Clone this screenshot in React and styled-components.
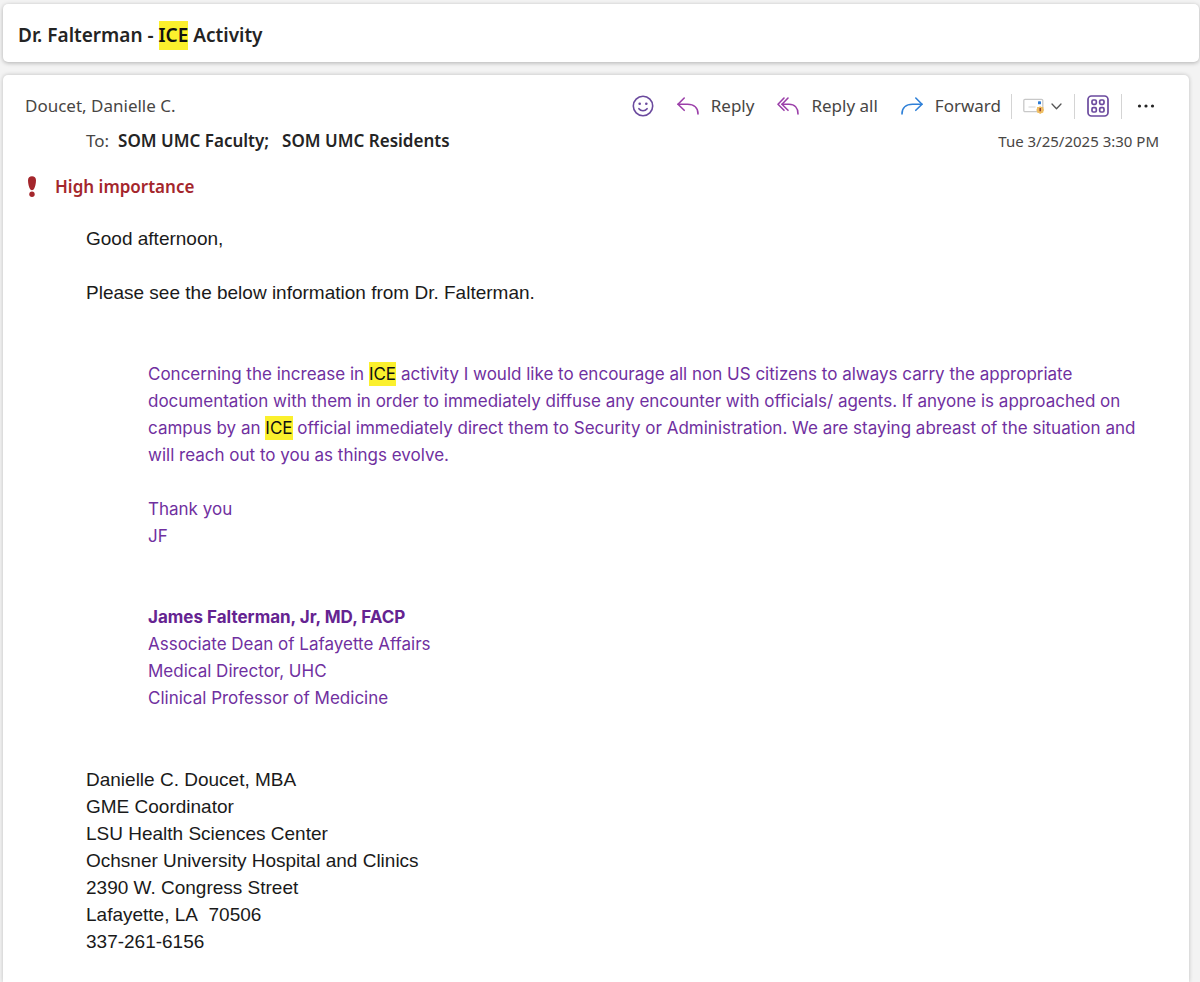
import styled, { createGlobalStyle, css } from 'styled-components';

const GlobalStyle = createGlobalStyle`
  * {
    box-sizing: border-box;
  }

  body {
    margin: 0;
    background: #f3f3f3;
    color: #242424;
    font-family: "Noto Sans", "Open Sans", sans-serif;
  }
`;

const Page = styled.div`
  display: flex;
  flex-direction: column;
  gap: 13px;
  min-height: 100vh;
  padding: 4px 1px 0 3px;
`;

const SubjectCard = styled.header`
  display: flex;
  align-items: center;
  height: 58px;
  padding: 4px 15px 0;
  background: #fff;
  border-radius: 5px;
  box-shadow: 0 1px 4px rgba(0, 0, 0, 0.28);
`;

const Subject = styled.h1`
  margin: 0;
  font-size: 19px;
  line-height: 29px;
  font-weight: 600;
`;

const Highlight = styled.mark`
  display: inline-block;
  height: ${props => props.$tall ? '29px' : '24px'};
  line-height: ${props => props.$tall ? '29px' : '24px'};
  background: #fbf02d;
  color: #111;
`;

const MailCard = styled.main`
  flex: 1;
  margin-right: 10px;
  padding: 16px 30px 24px 22px;
  background: #fff;
  border-radius: 5px 5px 0 0;
  box-shadow: 0 0 4px rgba(0, 0, 0, 0.22);
`;

const HeaderRow = styled.div`
  display: flex;
  align-items: center;
  justify-content: space-between;
  height: 30px;
`;

const Sender = styled.span`
  font-size: 17px;
  line-height: 24px;
  color: #484644;
`;

const Toolbar = styled.div`
  display: flex;
  align-items: center;
  margin-right: 4px;
`;

const baseButton = css`
  display: flex;
  align-items: center;
  padding: 0;
  background: none;
  border: none;
  color: #484644;
  cursor: pointer;
`;

const ActionButton = styled.button`
  ${baseButton}
  gap: 12px;
  margin-left: 23px;
  font-family: inherit;
  font-size: 17px;
  line-height: 24px;
`;

const IconButton = styled.button`
  ${baseButton}
  margin-left: ${props => props.$gap || 0}px;
`;

const Divider = styled.span`
  width: 1px;
  height: 25px;
  margin-left: ${props => props.$gap || 10}px;
  background: #d4d4d4;
`;

const RecipientRow = styled.div`
  display: flex;
  align-items: center;
  justify-content: space-between;
  height: 40px;
  padding-left: 61px;
`;

const Recipients = styled.div`
  display: flex;
  gap: 9px;
  font-size: 17px;
  line-height: 24px;
  color: #484644;
`;

const Recipient = styled.span`
  font-weight: 600;
  color: #242424;

  & + & {
    margin-left: 4px;
  }
`;

const SentTime = styled.time`
  font-size: 15px;
  line-height: 20px;
  color: #484644;
`;

const Importance = styled.div`
  display: flex;
  align-items: center;
  gap: 18px;
  height: 24px;
  margin: 14px 0 26px 2px;
  font-size: 17px;
  line-height: 24px;
  font-weight: 600;
  color: #a4262c;
`;

const Body = styled.article`
  padding-left: 61px;
  font-family: "Liberation Sans", Arial, sans-serif;
  font-size: 19px;
  line-height: 27px;
  color: #1a1a1a;
`;

const Paragraph = styled.p`
  margin: 0 0 27px;
`;

const Quote = styled.blockquote`
  margin: 55px -20px 54px 62px;
  font-family: Inter, Roboto, sans-serif;
  font-size: 17px;
  color: #7030a0;
`;

const Signature = styled.address`
  margin-top: 54px;
  font-style: normal;
`;

const SignerName = styled.strong`
  font-weight: 700;
  color: #652391;
`;

function SmileIcon() {
  return (
    <svg width="22" height="22" viewBox="0 0 22 22" fill="none" stroke="#6b4a9e" strokeWidth="1.6" strokeLinecap="round">
      <circle cx="11" cy="11" r="9.7" />
      <circle cx="7.7" cy="8.8" r="1.3" fill="#6b4a9e" stroke="none" />
      <circle cx="14.3" cy="8.8" r="1.3" fill="#6b4a9e" stroke="none" />
      <path d="M6.9 13.7c2 2.8 6.2 2.8 8.2 0" />
    </svg>
  );
}

function ReplyIcon() {
  return (
    <svg width="22" height="18" viewBox="0 0 22 18" fill="none" stroke="#9b3fa9" strokeWidth="1.6" strokeLinecap="round" strokeLinejoin="round">
      <path d="M7.2 1 1 7.3l6.2 6" />
      <path d="M1 7.3h9.5C17 7.3 21 11 21 17" />
    </svg>
  );
}

function ReplyAllIcon() {
  return (
    <svg width="22" height="18" viewBox="0 0 22 18" fill="none" stroke="#9b3fa9" strokeWidth="1.6" strokeLinecap="round" strokeLinejoin="round">
      <path d="M7 1 1 7.3l6 6" />
      <path d="m11 1-6 6.3 6 6" />
      <path d="M5 7.3h7c5.5 0 9 3.7 9 9.7" />
    </svg>
  );
}

function ForwardIcon() {
  return (
    <svg width="22" height="18" viewBox="0 0 22 18" fill="none" stroke="#2f80d8" strokeWidth="1.6" strokeLinecap="round" strokeLinejoin="round">
      <path d="m14.8 1 6.2 6.3-6.2 6" />
      <path d="M21 7.3h-9.5C5 7.3 1 11 1 17" />
    </svg>
  );
}

function MailIcon() {
  return (
    <svg width="21" height="16" viewBox="0 0 21 16" fill="none">
      <rect x="0.8" y="1.3" width="19" height="12.4" rx="1.2" stroke="#c8c8c8" strokeWidth="1.3" />
      <path d="M5.5 9h7" stroke="#dedede" strokeWidth="1.3" />
      <rect x="15" y="3.3" width="3" height="3" rx="0.6" fill="#2f7cd3" />
      <path d="M17.2 8.2 18.6 9l1.7-.1.1 1.7.6 1.4-.7 1.4-.1 1.3-1.5.2-1.5 1-1.4-1-1.5-.2-.2-1.3-.8-1.4.7-1.4.1-1.7 1.7.1z" fill="#efbd60" />
      <path d="M17.2 10v3.2" stroke="#8d3f35" strokeWidth="1.5" />
    </svg>
  );
}

function ChevronIcon() {
  return (
    <svg width="11" height="7" viewBox="0 0 11 7" fill="none" stroke="#555" strokeWidth="1.3" strokeLinecap="round" strokeLinejoin="round">
      <path d="m1 1 4.5 4.7L10 1" />
    </svg>
  );
}

function AppsIcon() {
  return (
    <svg width="22" height="22" viewBox="0 0 22 22" fill="none" stroke="#6b4a9e" strokeWidth="1.7">
      <rect x="1" y="1" width="20" height="20" rx="3.5" />
      <rect x="5" y="5" width="4.3" height="4.3" rx="1.2" />
      <rect x="12.7" y="5" width="4.3" height="4.3" rx="1.2" />
      <rect x="5" y="12.7" width="4.3" height="4.3" rx="1.2" />
      <rect x="12.7" y="12.7" width="4.3" height="4.3" rx="1.2" />
    </svg>
  );
}

function MoreIcon() {
  return (
    <svg width="18" height="4" viewBox="0 0 18 4" fill="#242424">
      <circle cx="2.5" cy="2" r="1.6" />
      <circle cx="9" cy="2" r="1.6" />
      <circle cx="15.5" cy="2" r="1.6" />
    </svg>
  );
}

function ImportanceIcon() {
  return (
    <svg width="10" height="22" viewBox="0 0 10 22" fill="#a4262c">
      <path d="M5 .3C2.6.3 1 1.9 1 4.2c0 3.5 1 6.8 1.9 8.6.4.9 1.1 1.4 2.1 1.4s1.7-.5 2.1-1.4C8 11 9 7.7 9 4.2 9 1.9 7.4.3 5 .3z" />
      <circle cx="5" cy="18.3" r="2.7" />
    </svg>
  );
}

export default function App() {
  return (
    <>
      <GlobalStyle />
      <Page>
        <SubjectCard>
          <Subject>
            Dr. Falterman - <Highlight $tall>ICE</Highlight> Activity
          </Subject>
        </SubjectCard>

        <MailCard>
          <HeaderRow>
            <Sender>Doucet, Danielle C.</Sender>
            <Toolbar>
              <IconButton aria-label="React"><SmileIcon /></IconButton>
              <ActionButton><ReplyIcon />Reply</ActionButton>
              <ActionButton><ReplyAllIcon />Reply all</ActionButton>
              <ActionButton><ForwardIcon />Forward</ActionButton>
              <Divider />
              <IconButton aria-label="Message options" $gap={11}><MailIcon /></IconButton>
              <IconButton aria-label="Open message options" $gap={7}><ChevronIcon /></IconButton>
              <Divider $gap={12} />
              <IconButton aria-label="Apps" $gap={12}><AppsIcon /></IconButton>
              <Divider $gap={12} />
              <IconButton aria-label="More actions" $gap={15}><MoreIcon /></IconButton>
            </Toolbar>
          </HeaderRow>

          <RecipientRow>
            <Recipients>
              <span>To:</span>
              <Recipient>SOM UMC Faculty;</Recipient>
              <Recipient>SOM UMC Residents</Recipient>
            </Recipients>
            <SentTime dateTime="2025-03-25T15:30">Tue 3/25/2025 3:30 PM</SentTime>
          </RecipientRow>

          <Importance>
            <ImportanceIcon />
            High importance
          </Importance>

          <Body>
            <Paragraph>Good afternoon,</Paragraph>
            <Paragraph>Please see the below information from Dr. Falterman.</Paragraph>

            <Quote>
              <Paragraph>
                Concerning the increase in <Highlight>ICE</Highlight> activity I would like to encourage all non US citizens to always carry the appropriate<br />
                documentation with them in order to immediately diffuse any encounter with officials/ agents. If anyone is approached on<br />
                campus by an <Highlight>ICE</Highlight> official immediately direct them to Security or Administration. We are staying abreast of the situation and<br />
                will reach out to you as things evolve.
              </Paragraph>
              <Paragraph>
                Thank you<br />
                JF
              </Paragraph>
              <Signature>
                <SignerName>James Falterman, Jr, MD, FACP</SignerName><br />
                Associate Dean of Lafayette Affairs<br />
                Medical Director, UHC<br />
                Clinical Professor of Medicine
              </Signature>
            </Quote>

            <Signature>
              Danielle C. Doucet, MBA<br />
              GME Coordinator<br />
              LSU Health Sciences Center<br />
              Ochsner University Hospital and Clinics<br />
              2390 W. Congress Street<br />
              Lafayette, LA&nbsp; 70506<br />
              337-261-6156
            </Signature>
          </Body>
        </MailCard>
      </Page>
    </>
  );
}
